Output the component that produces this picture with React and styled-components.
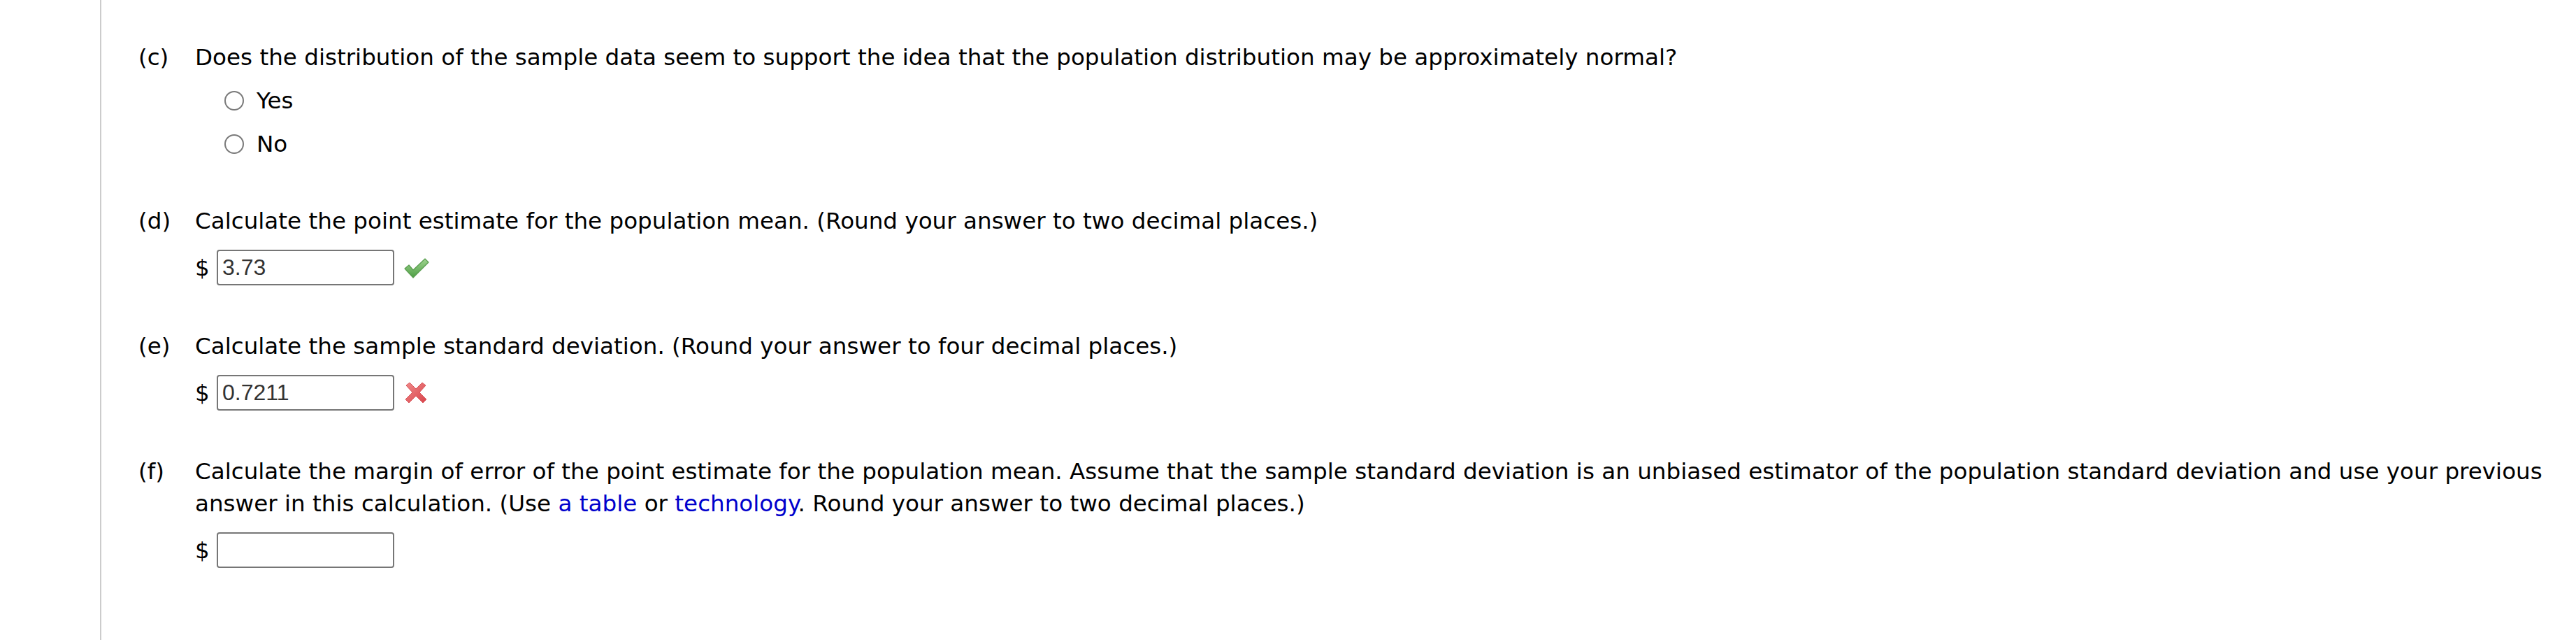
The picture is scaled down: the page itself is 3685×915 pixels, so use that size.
import React from "react";
import styled, { createGlobalStyle } from "styled-components";

const GlobalStyle = createGlobalStyle`
  html, body {
    margin: 0;
    padding: 0;
    background: #ffffff;
  }
  body {
    font-family: "DejaVu Sans", Verdana, sans-serif;
    color: #000000;
  }
`;

function CheckIcon() {
  return (
    <svg width="38" height="32" viewBox="0 0 38 32">
      <defs>
        <linearGradient id="okFill" x1="0" y1="0" x2="0" y2="1">
          <stop offset="0" stopColor="#9fd48f" />
          <stop offset="1" stopColor="#4e9e45" />
        </linearGradient>
      </defs>
      <path
        d="M2 17 L8 12 L14 19 L31 3 L36 8 L14 30 Z"
        fill="url(#okFill)"
        stroke="#5a9e50"
        strokeWidth="1.2"
        strokeLinejoin="round"
      />
    </svg>
  );
}

function CrossIcon() {
  return (
    <svg width="36" height="33" viewBox="0 0 36 33">
      <defs>
        <linearGradient id="badFill" x1="0" y1="0" x2="1" y2="1">
          <stop offset="0" stopColor="#f08a8a" />
          <stop offset="1" stopColor="#d8434a" />
        </linearGradient>
      </defs>
      <path
        d="M4 6 L9 2 L18 11 L27 2 L32 6 L23 16 L33 26 L28 31 L18 21 L8 31 L3 26 L13 16 Z"
        fill="url(#badFill)"
        stroke="#d9555a"
        strokeWidth="1"
        strokeLinejoin="round"
      />
    </svg>
  );
}

export default function App() {
  return (
    <>
      <GlobalStyle />
      <Page>
        <Gutter />
        <Sheet>
          <Question>
            <Label>(c)</Label>
            <Body>
              <Prompt>
                Does the distribution of the sample data seem to support the
                idea that the population distribution may be approximately
                normal?
              </Prompt>
              <Option>
                <Radio type="radio" name="normal" />
                <span>Yes</span>
              </Option>
              <Option>
                <Radio type="radio" name="normal" />
                <span>No</span>
              </Option>
            </Body>
          </Question>

          <Question>
            <Label>(d)</Label>
            <Body>
              <Prompt>
                Calculate the point estimate for the population mean. (Round
                your answer to two decimal places.)
              </Prompt>
              <AnswerRow>
                <Unit>$</Unit>
                <AnswerBox defaultValue="3.73" />
                <Mark>
                  <CheckIcon />
                </Mark>
              </AnswerRow>
            </Body>
          </Question>

          <Question>
            <Label>(e)</Label>
            <Body>
              <Prompt>
                Calculate the sample standard deviation. (Round your answer to
                four decimal places.)
              </Prompt>
              <AnswerRow>
                <Unit>$</Unit>
                <AnswerBox defaultValue="0.7211" />
                <Mark>
                  <CrossIcon />
                </Mark>
              </AnswerRow>
            </Body>
          </Question>

          <Question>
            <Label>(f)</Label>
            <Body>
              <Prompt>
                Calculate the margin of error of the point estimate for the
                population mean. Assume that the sample standard deviation is
                an unbiased estimator of the population standard deviation and
                use your previous answer in this calculation. (Use{" "}
                <Link href="#">a table</Link> or{" "}
                <Link href="#">technology</Link>. Round your answer to two
                decimal places.)
              </Prompt>
              <AnswerRow>
                <Unit>$</Unit>
                <AnswerBox defaultValue="" />
              </AnswerRow>
            </Body>
          </Question>
        </Sheet>
      </Page>
    </>
  );
}

const Page = styled.div`
  display: flex;
  min-height: 915px;
`;

const Gutter = styled.div`
  width: 143px;
  flex-shrink: 0;
`;

const Sheet = styled.div`
  border-left: 2px solid #cccccc;
  padding: 59px 20px 0 53px;
  flex: 1;
  display: flex;
  flex-direction: column;
  gap: 64px;
`;

const Question = styled.div`
  display: grid;
  grid-template-columns: 81px 1fr;
  font-size: 32.6px;
  line-height: 46px;
`;

const Label = styled.div``;

const Body = styled.div`
  display: flex;
  flex-direction: column;
`;

const Prompt = styled.div``;

const Option = styled.label`
  display: flex;
  align-items: center;
  gap: 18px;
  margin: 16px 0 0 42px;
  height: 46px;
`;

const Radio = styled.input`
  appearance: none;
  width: 28px;
  height: 28px;
  margin: 0;
  border: 2px solid #7a7a7a;
  border-radius: 50%;
  background: #ffffff;
  box-sizing: border-box;
`;

const AnswerRow = styled.div`
  display: flex;
  align-items: center;
  margin-top: 18px;
  height: 51px;
`;

const Unit = styled.span`
  width: 31px;
`;

const AnswerBox = styled.input`
  width: 254px;
  height: 51px;
  box-sizing: border-box;
  border: 2px solid #767676;
  border-radius: 4px;
  padding: 0 6px;
  font-family: "Liberation Sans", Arial, sans-serif;
  font-size: 32px;
  color: #333333;
  outline: none;
`;

const Mark = styled.span`
  display: flex;
  margin-left: 13px;
`;

const Link = styled.a`
  color: #0000cc;
  text-decoration: none;
`;
